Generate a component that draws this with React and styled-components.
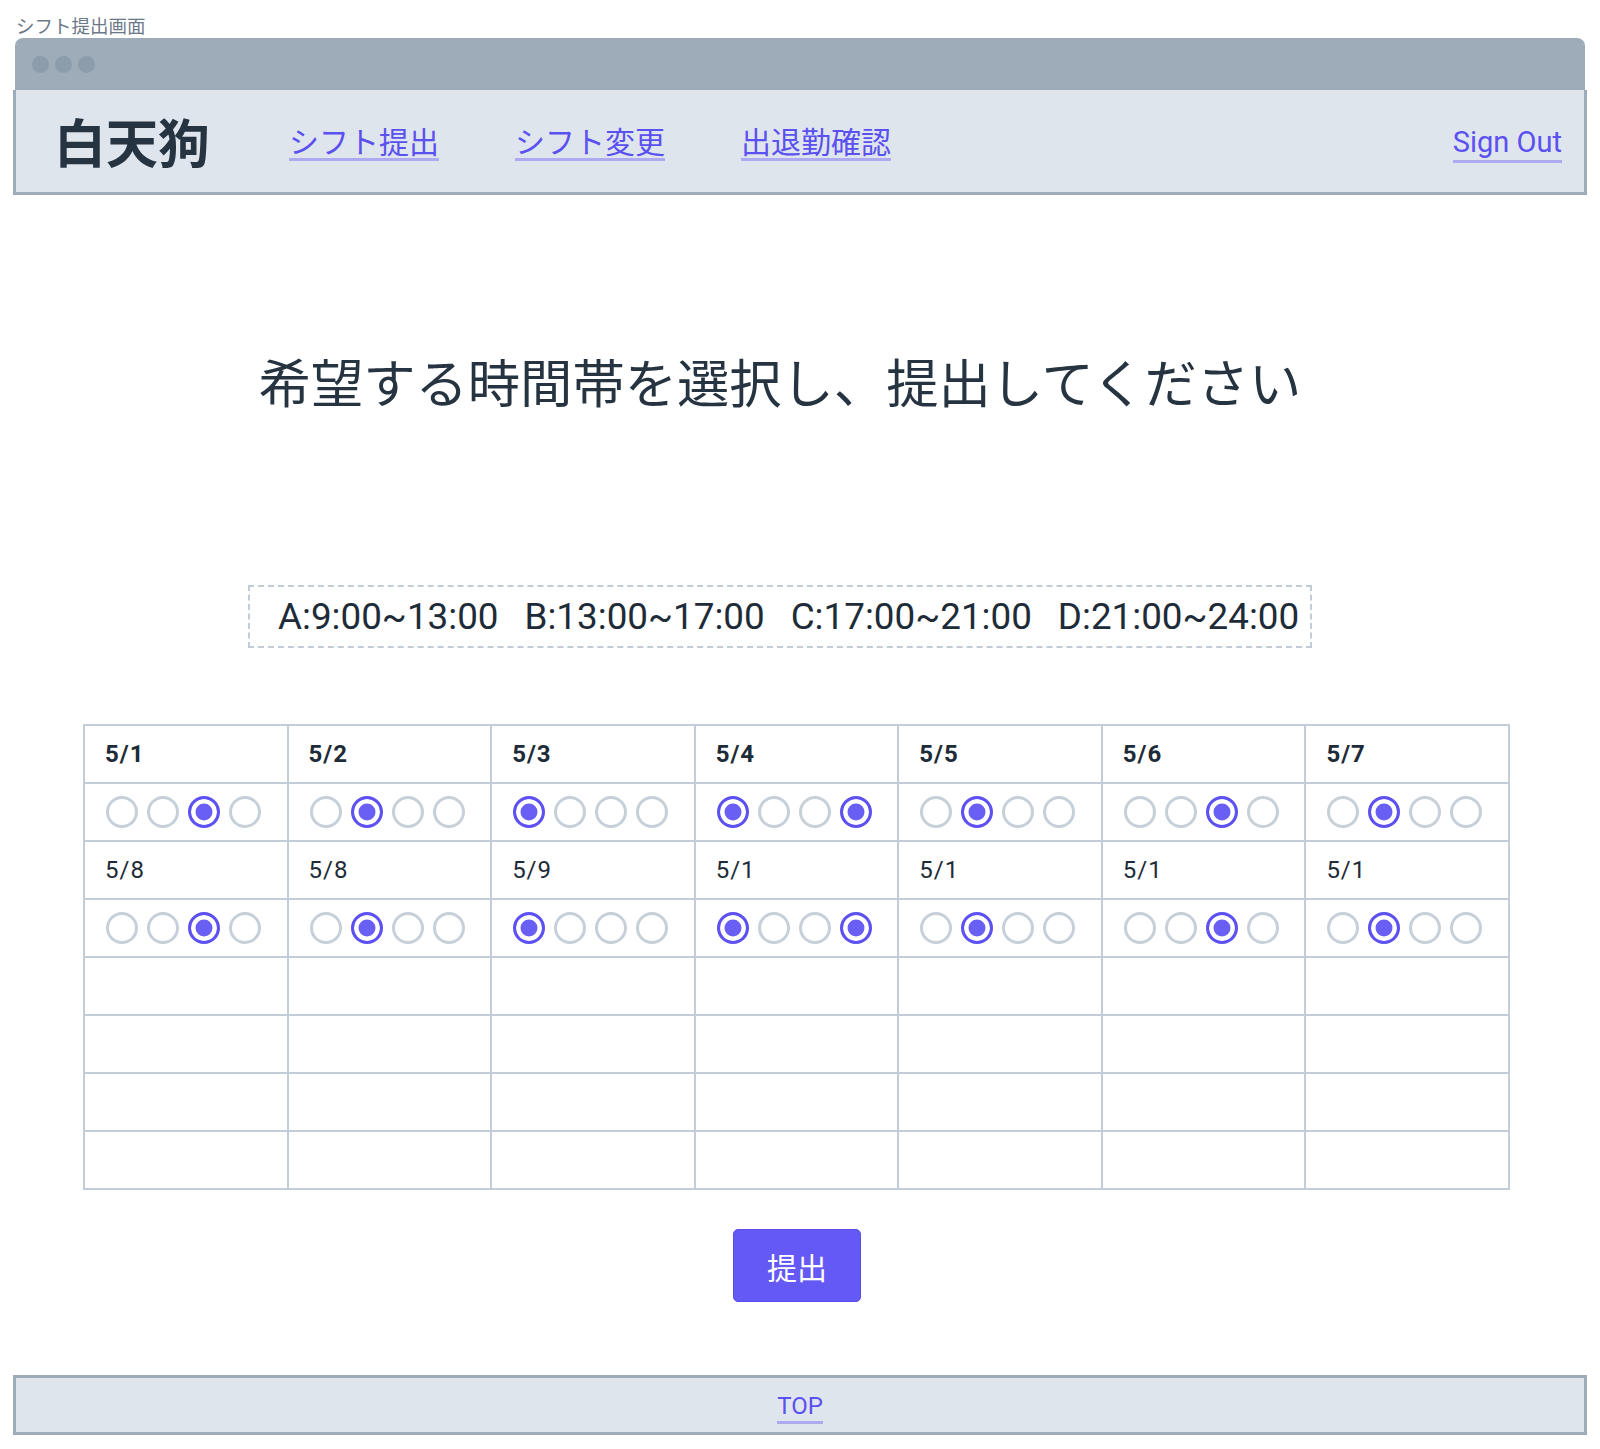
import React from 'react';
import styled, { createGlobalStyle } from 'styled-components';

const GlobalStyle = createGlobalStyle`
  html, body {
    margin: 0;
    padding: 0;
    background: #fff;
  }
  body {
    font-family: Roboto, "Noto Sans CJK JP", sans-serif;
    color: #263340;
  }
  * {
    box-sizing: border-box;
  }
`;

const Page = styled.div`
  width: 1600px;
  padding: 12px 13px 14px;
`;

const ScreenLabel = styled.div`
  margin-left: 3px;
  font-family: "Noto Sans CJK JP", sans-serif;
  font-size: 18.5px;
  line-height: 26px;
  color: #6b7888;
`;

const TitleBar = styled.div`
  height: 52px;
  margin: 0 2px;
  padding-left: 17px;
  display: flex;
  align-items: center;
  gap: 6px;
  background: #9dacb8;
  border-radius: 8px 8px 0 0;
`;

const Dot = styled.span`
  width: 17px;
  height: 17px;
  border-radius: 50%;
  background: #8c9cab;
`;

const Header = styled.header`
  height: 105px;
  padding: 0 22px 0 38px;
  display: flex;
  align-items: center;
  background: #dfe5ed;
  border: 3px solid #9dacb8;
  border-top: none;
`;

const Logo = styled.div`
  margin-right: 79px;
  font-family: "Noto Sans CJK JP", sans-serif;
  font-size: 52px;
  font-weight: 700;
  line-height: 1;
  color: #263340;
`;

const Nav = styled.nav`
  flex: 1;
  display: flex;
  gap: 76px;
`;

const Link = styled.a`
  display: inline-block;
  font-family: ${p => (p.$latin ? 'Roboto, sans-serif' : '"Noto Sans CJK JP", sans-serif')};
  font-size: ${p => p.$size || 30}px;
  line-height: 1.2;
  margin-top: ${p => p.$drop || 0}px;
  color: #5b50f0;
  text-decoration: none;
  border-bottom: 3px solid #aeaaf2;
  cursor: pointer;
`;

const Main = styled.main`
  display: flex;
  flex-direction: column;
  align-items: center;
`;

const Heading = styled.h1`
  margin: 154px 40px 0 0;
  font-family: "Noto Sans CJK JP", sans-serif;
  font-size: 52.3px;
  font-weight: 400;
  line-height: 62px;
  color: #263340;
`;

const Legend = styled.div`
  width: 1064px;
  height: 63px;
  margin: 174px 40px 0 0;
  padding-left: 28px;
  display: flex;
  align-items: center;
  gap: 26px;
  border: 2px dashed #c2ccd6;
  font-size: 36.8px;
  color: #1e2b38;
`;

const Grid = styled.table`
  width: 1427px;
  margin: 76px 7px 0 0;
  border-collapse: collapse;
  table-layout: fixed;
`;

const Cell = styled.td`
  height: 58px;
  padding: 0 0 0 20px;
  border: 2px solid #c3cdd8;
  font-size: 24px;
  font-weight: ${p => (p.$head ? 700 : 400)};
  letter-spacing: 1px;
  color: #1e2b38;
  vertical-align: middle;
`;

const Radios = styled.div`
  display: flex;
  gap: 9px;
  padding-left: 1px;
`;

const Radio = styled.span`
  display: block;
  width: 32px;
  height: 32px;
  border-radius: 50%;
  border: 3px solid ${p => (p.$on ? '#5d51f2' : '#c7cfd8')};
  background: ${p => (p.$on ? '#6a5ff4' : '#fff')};
  box-shadow: ${p => (p.$on ? 'inset 0 0 0 4.5px #fff' : 'none')};
`;

const SubmitButton = styled.button`
  width: 128px;
  height: 73px;
  margin: 39px 6px 0 0;
  background: #6559f5;
  border: 1px solid #5a4ee8;
  border-radius: 5px;
  color: #fff;
  font-family: "Noto Sans CJK JP", sans-serif;
  font-size: 30px;
  cursor: pointer;
`;

const Footer = styled.footer`
  height: 60px;
  margin-top: 73px;
  display: flex;
  align-items: center;
  justify-content: center;
  background: #dfe5ed;
  border: 3px solid #9dacb8;
`;

const slots = ['A:9:00~13:00', 'B:13:00~17:00', 'C:17:00~21:00', 'D:21:00~24:00'];
const week1 = ['5/1', '5/2', '5/3', '5/4', '5/5', '5/6', '5/7'];
const week2 = ['5/8', '5/8', '5/9', '5/1', '5/1', '5/1', '5/1'];
const picks = [[2], [1], [0], [0, 3], [1], [2], [1]];

function RadioRow() {
  return (
    <tr>
      {picks.map((on, i) => (
        <Cell key={i}>
          <Radios>
            {[0, 1, 2, 3].map(n => (
              <Radio key={n} $on={on.includes(n)} />
            ))}
          </Radios>
        </Cell>
      ))}
    </tr>
  );
}

function DateRow({ dates, head }) {
  return (
    <tr>
      {dates.map((d, i) => (
        <Cell key={i} $head={head}>{d}</Cell>
      ))}
    </tr>
  );
}

function App() {
  return (
    <>
      <GlobalStyle />
      <Page>
        <ScreenLabel>シフト提出画面</ScreenLabel>
        <TitleBar>
          <Dot />
          <Dot />
          <Dot />
        </TitleBar>
        <Header>
          <Logo>白天狗</Logo>
          <Nav>
            <Link>シフト提出</Link>
            <Link>シフト変更</Link>
            <Link>出退勤確認</Link>
          </Nav>
          <Link $latin $size={29} $drop={6}>Sign Out</Link>
        </Header>

        <Main>
          <Heading>希望する時間帯を選択し、提出してください</Heading>
          <Legend>
            {slots.map(s => (
              <span key={s}>{s}</span>
            ))}
          </Legend>
          <Grid>
            <tbody>
              <DateRow dates={week1} head />
              <RadioRow />
              <DateRow dates={week2} />
              <RadioRow />
              {[0, 1, 2, 3].map(r => (
                <DateRow key={r} dates={['', '', '', '', '', '', '']} />
              ))}
            </tbody>
          </Grid>
          <SubmitButton>提出</SubmitButton>
        </Main>

        <Footer>
          <Link $latin $size={24} $drop={6}>TOP</Link>
        </Footer>
      </Page>
    </>
  );
}

export default App;
